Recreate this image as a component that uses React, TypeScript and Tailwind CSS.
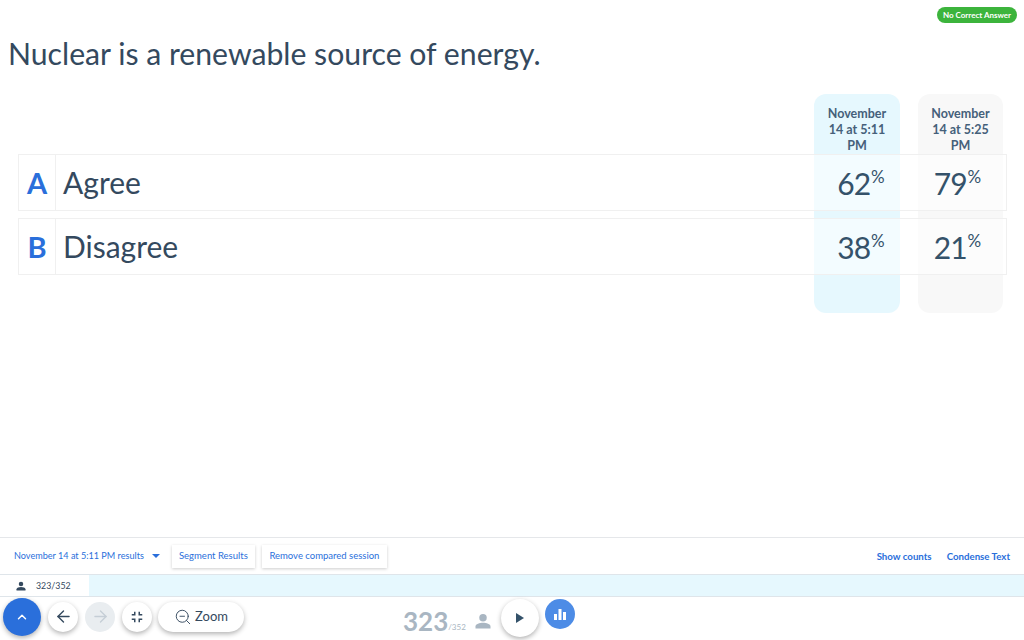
import { ArrowLeft, ArrowRight, ChevronUp, ZoomOut } from "lucide-react";

const answers = [
  { letter: "A", label: "Agree", first: 62, second: 79 },
  { letter: "B", label: "Disagree", first: 38, second: 21 },
];

const sessions = [
  { time: "14 at 5:11", bg: "bg-[#e6f8fe]", width: "w-[86px]" },
  { time: "14 at 5:25", bg: "bg-[#f8f8f8]", width: "w-[85px]" },
];

function Person({ className }: { className: string }) {
  return (
    <svg viewBox="0 0 24 24" className={className} fill="currentColor">
      <circle cx="12" cy="8" r="4.5" />
      <path d="M3 21v-2.5C3 15.5 8 14 12 14s9 1.5 9 4.5V21z" />
    </svg>
  );
}

function Percent({ value, className }: { value: number; className: string }) {
  return (
    <div className={`flex justify-center text-[#34526a] ${className}`}>
      <span className="text-[30px] leading-none tracking-[-1px]">{value}</span>
      <span className="ml-[1px] text-[17px] leading-none">%</span>
    </div>
  );
}

function RoundButton({ children, disabled }: { children: React.ReactNode; disabled?: boolean }) {
  return (
    <button
      className={`flex h-[30px] w-[30px] items-center justify-center rounded-full ${
        disabled ? "bg-[#e9edf0] text-[#c5ced6]" : "bg-white text-[#34495e] shadow-[0_2px_5px_rgba(0,0,0,0.3)]"
      }`}
    >
      {children}
    </button>
  );
}

export default function App() {
  return (
    <div className="flex h-[640px] w-[1024px] flex-col overflow-hidden bg-white font-['Lato',sans-serif] text-[#34495e]">
      <header className="h-[94px] shrink-0">
        <div className="flex justify-end pt-[7px] pr-[7px]">
          <span className="flex h-[16px] w-[80px] items-center justify-center rounded-full bg-[#3cb43c] text-[8px] font-bold text-white">
            No Correct Answer
          </span>
        </div>
        <h1 className="mt-[10px] pl-[8px] text-[30.2px] leading-[40px] text-[#34495e]">
          Nuclear is a renewable source of energy.
        </h1>
      </header>

      <main className="relative flex-1">
        <div className="absolute top-0 left-[814px] flex gap-[18px]">
          {sessions.map((s) => (
            <div
              key={s.time}
              className={`h-[219px] rounded-[12px] pt-[12px] text-center text-[12.5px] leading-[16px] font-bold text-[#45607a] ${s.bg} ${s.width}`}
            >
              November
              <br />
              {s.time}
              <br />
              PM
            </div>
          ))}
        </div>

        <div className="relative ml-[18px] flex w-[989px] flex-col gap-[7px] pt-[60px]">
          {answers.map((a) => (
            <div key={a.letter} className="flex h-[57px] items-center border border-[#f0f0f0] bg-white/50">
              <div className="flex h-full w-[37px] items-center justify-center border-r border-[#f0f0f0] text-[29px] font-bold text-[#2a6fdb]">
                {a.letter}
              </div>
              <div className="flex-1 pb-[2px] pl-[7px] text-[30px] leading-none">{a.label}</div>
              <Percent value={a.first} className="w-[86px] pl-[8px]" />
              <Percent value={a.second} className="mr-[3px] ml-[18px] w-[85px] pr-[6px]" />
            </div>
          ))}
        </div>
      </main>

      <div className="flex h-[37px] shrink-0 items-center border-t border-[#e5e7ea] px-[14px] text-[9.5px] text-[#2a6fdb]">
        <span className="text-[9.1px]">November 14 at 5:11 PM results</span>
        <span className="mr-[12px] ml-[8px] h-0 w-0 border-x-[4px] border-t-[4px] border-x-transparent border-t-[#2a6fdb]" />
        <button className="mr-[7px] h-[23px] w-[83px] shadow-[0_1px_3px_rgba(0,0,0,0.2)]">Segment Results</button>
        <button className="h-[23px] w-[125px] shadow-[0_1px_3px_rgba(0,0,0,0.2)]">Remove compared session</button>
        <div className="ml-auto flex gap-[15px] text-[9.7px] font-bold">
          <span>Show counts</span>
          <span>Condense Text</span>
        </div>
      </div>

      <div className="flex h-[23px] shrink-0 border-y border-[#dfe5ea] bg-[#e6f8fe]">
        <div className="flex w-[89px] items-center gap-[9px] bg-white pl-[15px] text-[8.8px] text-[#34495e]">
          <Person className="h-[12px] w-[12px]" />
          323/352
        </div>
      </div>

      <footer className="relative flex h-[43px] shrink-0 items-center pb-[4px]">
        <div className="flex items-center gap-[7px] pl-[3px]">
          <button className="flex h-[38px] w-[38px] items-center justify-center rounded-full bg-[#2a6fdb] text-white shadow-[0_2px_5px_rgba(0,0,0,0.3)]">
            <ChevronUp size={14} strokeWidth={2.5} />
          </button>
          <RoundButton>
            <ArrowLeft size={19} strokeWidth={1.75} />
          </RoundButton>
          <RoundButton disabled>
            <ArrowRight size={19} strokeWidth={1.75} />
          </RoundButton>
          <RoundButton>
            <svg viewBox="0 0 24 24" className="h-[18px] w-[18px]" fill="currentColor">
              <path d="M5 16h3v3h2v-5H5zm3-8H5v2h5V5H8zm6 11h2v-3h3v-2h-5zm2-11V5h-2v5h5V8z" />
            </svg>
          </RoundButton>
          <button className="ml-[-1px] flex h-[30px] w-[86px] items-center justify-center gap-[3px] rounded-full bg-white text-[13px] shadow-[0_2px_5px_rgba(0,0,0,0.3)]">
            <ZoomOut size={18} strokeWidth={1.25} />
            Zoom
          </button>
        </div>
        <div className="absolute top-[2px] left-[403px] flex items-start">
          <span className="mt-[3px] text-[26px] leading-[38px] font-bold text-[#a9b6c2]">323</span>
          <span className="mt-[22px] text-[8px] leading-[12px] text-[#a9b6c2]">/352</span>
          <Person className="mt-[12px] ml-[7px] h-[20px] w-[20px] text-[#a9b6c2]" />
          <button className="ml-[8px] flex h-[38px] w-[38px] items-center justify-center rounded-full bg-white shadow-[0_2px_5px_rgba(0,0,0,0.3)]">
            <svg viewBox="0 0 10 10" className="h-[10px] w-[10px] text-[#34526a]" fill="currentColor">
              <polygon points="1,0 9,5 1,10" />
            </svg>
          </button>
          <button className="ml-[6px] flex h-[30px] w-[30px] items-center justify-center rounded-full bg-[#4d8ce6] text-white">
            <svg viewBox="0 0 14 14" className="h-[14px] w-[14px]" fill="currentColor">
              <rect x="1" y="7" width="3" height="6" />
              <rect x="5.5" y="2" width="3" height="11" />
              <rect x="10" y="5" width="3" height="8" />
            </svg>
          </button>
        </div>
      </footer>
    </div>
  );
}
